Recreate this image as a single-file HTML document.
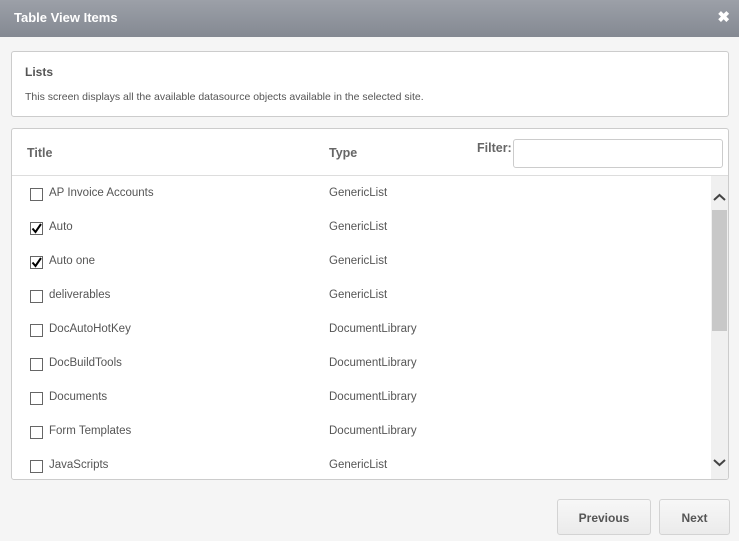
<!DOCTYPE html><html><head><style>
body{margin:0;width:739px;height:541px;background:#f5f5f5;font-family:"Liberation Sans",sans-serif;position:relative;overflow:hidden}
.hd{position:absolute;left:0;top:0;width:739px;height:37px;background:linear-gradient(#9ca0a8,#848992);color:#fff;font-weight:bold;font-size:13px}
.hd .t{position:absolute;left:14px;top:10px}
.hd .x{position:absolute;right:9px;top:8px;font-size:15px}
.box{position:absolute;left:11px;width:716px;background:#fff;border:1px solid #ccc;border-radius:3px}
.b1{top:51px;height:64px}
.b1 .h{position:absolute;left:13px;top:13px;font-size:12px;color:#555;font-weight:bold}
.b1 .p{position:absolute;left:13px;top:39px;font-size:10.5px;color:#555;white-space:nowrap}
.b2{top:128px;height:350px;overflow:hidden}
.th{position:absolute;top:17px;font-size:12.5px;font-weight:bold;color:#666}
.sep{position:absolute;left:0;right:0;top:46px;border-top:1px solid #ddd}
.flt{position:absolute;left:501px;top:10px;width:208px;height:27px;border:1px solid #ccc;border-radius:3px}
.row{position:absolute;left:0;width:690px;height:34px;font-size:11.5px;color:#555;white-space:nowrap}
.cb{position:absolute;left:18px;top:-5px;width:11px;height:11px;border:1px solid #666;background:#fff}
.row .a{position:absolute;left:37px;top:-6px}
.row .b{position:absolute;left:317px;top:-6px}
.sb{position:absolute;left:699px;top:47px;width:17px;height:303px;background:#f0f0f0}
.thumb{position:absolute;left:1px;top:34px;width:15px;height:121px;background:#c8c8c8}
.btn{position:absolute;top:499px;height:36px;border:1px solid #d3d3d3;border-radius:3px;background:linear-gradient(#f7f7f7,#ebebeb);font-size:12px;font-weight:bold;color:#555;text-align:center;line-height:36px;box-sizing:border-box}
</style></head><body>
<div class="hd"><span class="t">Table View Items</span><span class="x">✖</span></div>
<div class="box b1"><div class="h">Lists</div><div class="p">This screen displays all the available datasource objects available in the selected site.</div></div>
<div class="box b2">
<div class="th" style="left:15px">Title</div><div class="th" style="left:317px">Type</div>
<div class="th" style="left:465px;top:12px">Filter:</div><div class="flt"></div>
<div class="sep"></div>
<div class="row" style="top:64px"><div class="cb"></div><span class="a">AP Invoice Accounts</span><span class="b">GenericList</span></div>
<div class="row" style="top:98px"><div class="cb"><svg width="11" height="11" style="position:absolute;left:0;top:0"><path d="M1.5 5.5l3 3.5 5.5-8" stroke="#000" stroke-width="2" fill="none"/></svg></div><span class="a">Auto</span><span class="b">GenericList</span></div>
<div class="row" style="top:132px"><div class="cb"><svg width="11" height="11" style="position:absolute;left:0;top:0"><path d="M1.5 5.5l3 3.5 5.5-8" stroke="#000" stroke-width="2" fill="none"/></svg></div><span class="a">Auto one</span><span class="b">GenericList</span></div>
<div class="row" style="top:166px"><div class="cb"></div><span class="a">deliverables</span><span class="b">GenericList</span></div>
<div class="row" style="top:200px"><div class="cb"></div><span class="a">DocAutoHotKey</span><span class="b">DocumentLibrary</span></div>
<div class="row" style="top:234px"><div class="cb"></div><span class="a">DocBuildTools</span><span class="b">DocumentLibrary</span></div>
<div class="row" style="top:268px"><div class="cb"></div><span class="a">Documents</span><span class="b">DocumentLibrary</span></div>
<div class="row" style="top:302px"><div class="cb"></div><span class="a">Form Templates</span><span class="b">DocumentLibrary</span></div>
<div class="row" style="top:336px"><div class="cb"></div><span class="a">JavaScripts</span><span class="b">GenericList</span></div>
<div class="sb"><svg width="17" height="17" style="position:absolute;top:13px"><path d="M3 11l5.5-5 5.5 5" stroke="#444" stroke-width="2" fill="none"/></svg><div class="thumb"></div><svg width="17" height="17" style="position:absolute;top:278px"><path d="M3 6l5.5 5 5.5-5" stroke="#444" stroke-width="2" fill="none"/></svg></div>
</div>
<div class="btn" style="left:557px;width:94px">Previous</div>
<div class="btn" style="left:659px;width:71px">Next</div>
</body></html>
